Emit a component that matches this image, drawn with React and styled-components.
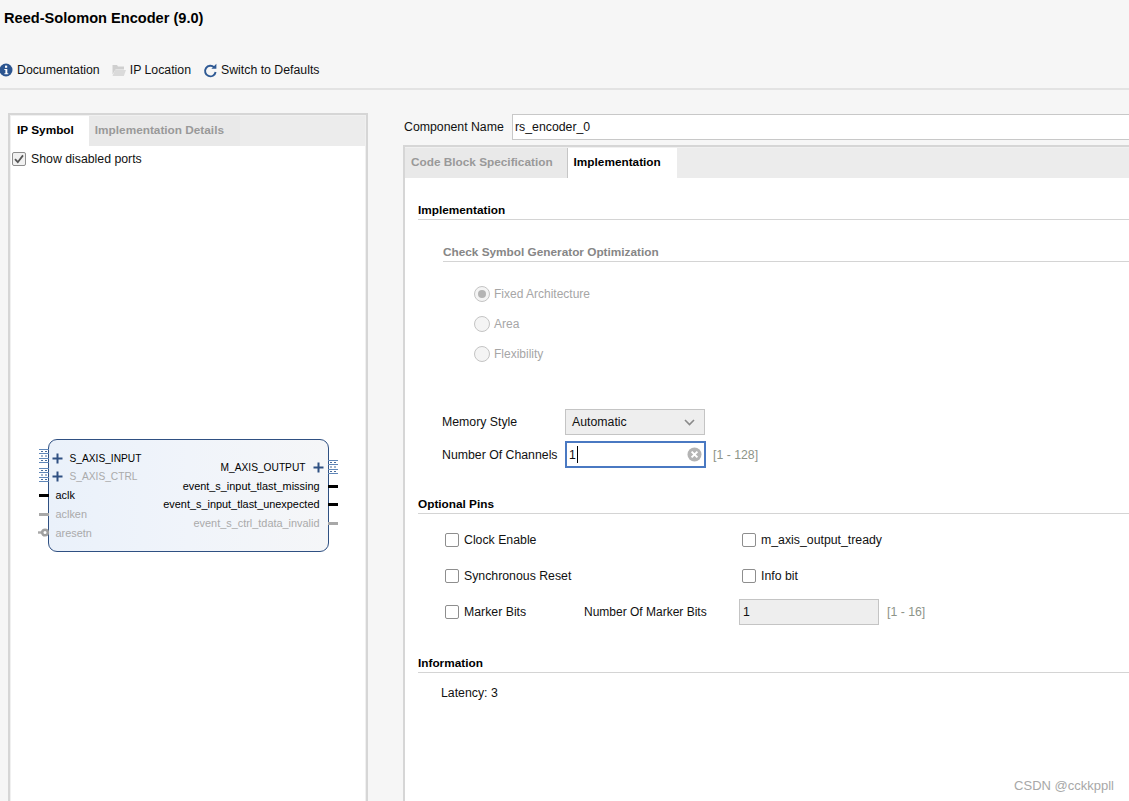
import styled, { createGlobalStyle } from "styled-components"

const GlobalStyle = createGlobalStyle`
  html, body {
    margin: 0;
    padding: 0;
    background: #f6f6f6;
    overflow: hidden;
  }
  * {
    box-sizing: border-box;
  }
`

const Page = styled.div`
  position: relative;
  width: 1129px;
  height: 801px;
  overflow: hidden;
  background: #f6f6f6;
  font-family: "Liberation Sans", Arial, sans-serif;
  font-size: 12.3px;
  color: #111;
`

const Header = styled.header`
  height: 90px;
  border-bottom: 2px solid #e3e3e3;
`

const Title = styled.h1`
  margin: 0;
  height: 36px;
  padding-left: 4px;
  font-size: 14.6px;
  line-height: 37px;
  font-weight: bold;
  color: #000;
`

const Toolbar = styled.div`
  display: flex;
  align-items: center;
  height: 24px;
  margin-top: 22px;
`

const ToolItem = styled.div`
  display: flex;
  align-items: center;
  gap: 4px;
  margin-right: 12px;
`

const Main = styled.main`
  display: flex;
  align-items: flex-start;
  padding: 23px 0 0 8px;
`

const LeftPanel = styled.section`
  flex: none;
  width: 360px;
  height: 720px;
  border: 2px solid #d6d6d6;
  padding: 1px 1px 0 1px;
  background: #f0f0f0;
  display: flex;
  flex-direction: column;
`

const TabStrip = styled.div`
  display: flex;
  flex: none;
  height: 30px;
  background: #ececec;
`

const Tab = styled.div`
  display: flex;
  align-items: center;
  padding: 0 ${(p) => p.$end || 16}px 2px 6px;
  font-weight: bold;
  font-size: 11.8px;
  background: ${(p) => (p.$active ? "#fff" : "#e9e9e9")};
  color: ${(p) => (p.$active ? "#000" : "#999")};
  border-left: ${(p) => (p.$sep ? "1px solid #c6c6c6" : "none")};
`

const PanelBody = styled.div`
  flex: 1;
  background: #fff;
`

const ShowPorts = styled.label`
  display: flex;
  align-items: center;
  gap: 5px;
  height: 26px;
  padding-left: 1px;
`

const Canvas = styled.div`
  display: flex;
  justify-content: center;
  padding-top: 267px;
`

const Block = styled.div`
  position: relative;
  display: flex;
  justify-content: space-between;
  width: 281px;
  height: 113px;
  border: 1px solid #2f5082;
  border-radius: 9px;
  background: linear-gradient(90deg, #eaf1fa 0%, #f0f4fa 50%, #f5f6f8 100%);
`

const PinColumn = styled.div`
  display: flex;
  flex-direction: column;
  padding-top: ${(p) => p.$top}px;
`

const PinRow = styled.div`
  position: relative;
  display: flex;
  align-items: center;
  justify-content: ${(p) => (p.$right ? "flex-end" : "flex-start")};
  gap: 7px;
  height: 18.6px;
  padding: ${(p) => {
    const inset = p.$bus ? 3 : 7
    return p.$right ? `0 ${inset + 1}px 0 0` : `0 0 0 ${inset}px`
  }};
  font-size: ${(p) => (p.$bus ? "10.2px" : "10.9px")};
  color: ${(p) => (p.$off ? "#aaa" : "#000")};
  white-space: nowrap;
`

const Stub = styled.span`
  position: absolute;
  top: 8px;
  width: 10px;
  height: 3px;
  background: ${(p) => (p.$off ? "#a8a8a8" : "#000")};
  ${(p) => (p.$right ? "right: -10px;" : "left: -10px;")}
`

const BusMark = styled.span`
  position: absolute;
  top: ${(p) => (p.$right ? 2 : 0)}px;
  line-height: 0;
  ${(p) => (p.$right ? "right: -10px;" : "left: -10px;")}
`

const ResetMark = styled.span`
  position: absolute;
  top: 4px;
  left: -11px;
  line-height: 0;
`

const RightColumn = styled.section`
  flex: none;
  width: 760px;
  margin-left: 35px;
`

const NameRow = styled.div`
  display: flex;
  align-items: center;
  height: 26px;
  margin-top: 1px;
  padding-left: 1px;
`

const NameLabel = styled.span`
  flex: none;
  width: 108px;
`

const NameInput = styled.div`
  flex: 1;
  height: 26px;
  padding-left: 2px;
  line-height: 24px;
  background: #fff;
  border: 1px solid #c8c8c8;
`

const RightPanel = styled.div`
  display: flex;
  flex-direction: column;
  height: 660px;
  margin-top: 5px;
  border: 2px solid #d6d6d6;
  border-right: none;
  padding-top: 1px;
  background: #f0f0f0;
`

const Content = styled.div`
  flex: 1;
  padding-left: 13px;
  background: #fff;
`

const SectionTitle = styled.div`
  height: 20px;
  margin-top: ${(p) => p.$top}px;
  margin-left: ${(p) => p.$left || 0}px;
  line-height: 21px;
  font-size: 11.8px;
  font-weight: bold;
  color: ${(p) => (p.$muted ? "#868686" : "#000")};
  border-bottom: 1px solid #d4d4d4;
`

const RadioGroup = styled.div`
  margin: 17px 0 0 56px;
`

const RadioRow = styled.div`
  display: flex;
  align-items: center;
  gap: 4px;
  height: 30px;
  font-size: 12px;
  color: #a6a6a6;
`

const Radio = styled.span`
  display: flex;
  align-items: center;
  justify-content: center;
  width: 16px;
  height: 16px;
  border: 1px solid #c4c4c4;
  border-radius: 50%;
  background: #f4f4f4;
  &::after {
    content: "";
    display: ${(p) => (p.$on ? "block" : "none")};
    width: 8px;
    height: 8px;
    border-radius: 50%;
    background: #b4b4b4;
  }
`

const FieldRow = styled.div`
  display: flex;
  align-items: center;
  margin: ${(p) => p.$top}px 0 0 24px;
`

const FieldLabel = styled.span`
  flex: none;
  width: 123px;
`

const Select = styled.div`
  display: flex;
  align-items: center;
  justify-content: space-between;
  width: 140px;
  height: 26px;
  padding: 0 9px 0 6px;
  background: #eee;
  border: 1px solid #c4c4c4;
`

const NumberInput = styled.div`
  display: flex;
  align-items: center;
  justify-content: space-between;
  width: 141px;
  height: 27px;
  padding: 0 2px 0 2px;
  background: #fff;
  border: 2px solid #4a79c2;
`

const Caret = styled.span`
  width: 1px;
  height: 17px;
  margin-left: 1px;
  background: #000;
`

const InputValue = styled.span`
  display: flex;
  align-items: center;
  flex: 1;
`

const Range = styled.span`
  margin-left: ${(p) => p.$left || 8}px;
  color: #8d9488;
`

const PinsGrid = styled.div`
  display: grid;
  grid-template-columns: 139px 155px 300px;
  grid-auto-rows: 36px;
  align-items: center;
  margin: 8px 0 0 27px;
`

const CheckRow = styled.div`
  display: flex;
  align-items: center;
  gap: 5px;
  grid-column: ${(p) => p.$col || "auto"};
  padding-left: ${(p) => p.$indent || 0}px;
`

const CheckBox = styled.span`
  display: flex;
  align-items: center;
  justify-content: center;
  flex: none;
  width: 14px;
  height: 14px;
  border: 1px solid #8e8e8e;
  border-radius: 2px;
  background: ${(p) => (p.$on ? "#f1f1f1" : "#fff")};
`

const MarkerLabel = styled.span`
  font-size: 12px;
`

const MarkerField = styled.div`
  display: flex;
  align-items: center;
`

const MarkerInput = styled.div`
  width: 140px;
  height: 26px;
  padding-left: 3px;
  line-height: 24px;
  background: #eee;
  border: 1px solid #c4c4c4;
`

const InfoLine = styled.div`
  height: 20px;
  margin: 10px 0 0 23px;
  line-height: 21px;
`

const Watermark = styled.div`
  position: absolute;
  right: 15px;
  bottom: 8px;
  font-size: 13px;
  color: #a8a8a8;
`

const InfoIcon = () => (
  <svg width="13" height="14" viewBox="0 0 13 14">
    <circle cx="6" cy="7" r="6.5" fill="#2c5590" />
    <rect x="5" y="2.6" width="2.2" height="2.2" fill="#fff" />
    <path d="M4.4 6h2.9v4.2h1v1H4.4v-1h1V7h-1z" fill="#fff" />
  </svg>
)

const FolderIcon = () => (
  <svg width="14" height="13" viewBox="0 0 14 13">
    <path d="M0.5 1h4.5l1 1.5h6v3H3.5l-3 5z" fill="#cfcfcf" />
    <path d="M3 6h11l-2.2 6H0.5z" fill="#dadada" />
  </svg>
)

const RefreshIcon = () => (
  <svg width="14" height="15" viewBox="0 0 14 15">
    <path d="M11.2 4.4A5.3 5.3 0 1 0 12.6 9" fill="none" stroke="#2f5a94" strokeWidth="1.9" />
    <path d="M8.4 5.8h5V0.8z" fill="#2f5a94" />
  </svg>
)

const BusIcon = () => (
  <svg width="10" height="15" viewBox="0 0 10 15">
    <path d="M0 0.5h10M0 4.5h10M0 9.5h10M0 13.5h10" stroke="#5f86b8" />
    <path d="M2 2.5h2M6 2.5h2M2 7h2M6 7h2M2 11.5h2M6 11.5h2" stroke="#4a6d9c" strokeWidth="1.2" />
  </svg>
)

const PlusIcon = () => (
  <svg width="11" height="11" viewBox="0 0 11 11">
    <path d="M5.5 0.5v10M0.5 5.5h10" stroke="#2f5082" strokeWidth="2" />
  </svg>
)

const ResetIcon = () => (
  <svg width="13" height="11" viewBox="0 0 13 11">
    <path d="M0 5.5h4" stroke="#a8a8a8" strokeWidth="2.4" />
    <circle cx="7" cy="5.5" r="2.8" fill="#fff" stroke="#a0a0a0" strokeWidth="2.6" />
  </svg>
)

const CheckMark = () => (
  <svg width="10" height="10" viewBox="0 0 10 10">
    <path d="M1 5.2l2.8 3L9 1.4" fill="none" stroke="#555" strokeWidth="1.8" />
  </svg>
)

const ChevronIcon = () => (
  <svg width="11" height="7" viewBox="0 0 11 7">
    <path d="M1 1l4.5 4.5L10 1" fill="none" stroke="#8a8a8a" strokeWidth="1.6" />
  </svg>
)

const ClearIcon = () => (
  <svg width="15" height="15" viewBox="0 0 15 15">
    <circle cx="7.5" cy="7.5" r="7" fill="#b4b4b4" />
    <path d="M4.6 4.6l5.8 5.8M10.4 4.6l-5.8 5.8" stroke="#fff" strokeWidth="2" />
  </svg>
)

const leftPins = [
  { name: "S_AXIS_INPUT", bus: true },
  { name: "S_AXIS_CTRL", bus: true, off: true },
  { name: "aclk" },
  { name: "aclken", off: true },
  { name: "aresetn", off: true, reset: true },
]

const rightPins = [
  { name: "M_AXIS_OUTPUT", bus: true },
  { name: "event_s_input_tlast_missing" },
  { name: "event_s_input_tlast_unexpected" },
  { name: "event_s_ctrl_tdata_invalid", off: true },
]

const App = () => {
  return (
    <Page>
      <GlobalStyle />
      <Header>
        <Title>Reed-Solomon Encoder (9.0)</Title>
        <Toolbar>
          <ToolItem>
            <InfoIcon />
            Documentation
          </ToolItem>
          <ToolItem>
            <FolderIcon />
            IP Location
          </ToolItem>
          <ToolItem>
            <RefreshIcon />
            Switch to Defaults
          </ToolItem>
        </Toolbar>
      </Header>
      <Main>
        <LeftPanel>
          <TabStrip>
            <Tab $active $end={15}>
              IP Symbol
            </Tab>
            <Tab>Implementation Details</Tab>
          </TabStrip>
          <PanelBody>
            <ShowPorts>
              <CheckBox $on>
                <CheckMark />
              </CheckBox>
              Show disabled ports
            </ShowPorts>
            <Canvas>
              <Block>
                <PinColumn $top={9}>
                  {leftPins.map((pin) => (
                    <PinRow key={pin.name} $off={pin.off} $bus={pin.bus}>
                      {pin.bus && (
                        <BusMark>
                          <BusIcon />
                        </BusMark>
                      )}
                      {pin.bus && <PlusIcon />}
                      {!pin.bus && !pin.reset && <Stub $off={pin.off} />}
                      {pin.reset && (
                        <ResetMark>
                          <ResetIcon />
                        </ResetMark>
                      )}
                      {pin.name}
                    </PinRow>
                  ))}
                </PinColumn>
                <PinColumn $top={18}>
                  {rightPins.map((pin) => (
                    <PinRow key={pin.name} $right $off={pin.off} $bus={pin.bus}>
                      {pin.name}
                      {pin.bus && <PlusIcon />}
                      {pin.bus ? (
                        <BusMark $right>
                          <BusIcon />
                        </BusMark>
                      ) : (
                        <Stub $right $off={pin.off} />
                      )}
                    </PinRow>
                  ))}
                </PinColumn>
              </Block>
            </Canvas>
          </PanelBody>
        </LeftPanel>
        <RightColumn>
          <NameRow>
            <NameLabel>Component Name</NameLabel>
            <NameInput>rs_encoder_0</NameInput>
          </NameRow>
          <RightPanel>
            <TabStrip>
              <Tab $end={14}>Code Block Specification</Tab>
              <Tab $active $sep>
                Implementation
              </Tab>
            </TabStrip>
            <Content>
              <SectionTitle $top={22}>Implementation</SectionTitle>
              <SectionTitle $top={22} $left={25} $muted>
                Check Symbol Generator Optimization
              </SectionTitle>
              <RadioGroup>
                <RadioRow>
                  <Radio $on />
                  Fixed Architecture
                </RadioRow>
                <RadioRow>
                  <Radio />
                  Area
                </RadioRow>
                <RadioRow>
                  <Radio />
                  Flexibility
                </RadioRow>
              </RadioGroup>
              <FieldRow $top={40}>
                <FieldLabel>Memory Style</FieldLabel>
                <Select>
                  Automatic
                  <ChevronIcon />
                </Select>
              </FieldRow>
              <FieldRow $top={6}>
                <FieldLabel>Number Of Channels</FieldLabel>
                <NumberInput>
                  <InputValue>
                    1
                    <Caret />
                  </InputValue>
                  <ClearIcon />
                </NumberInput>
                <Range $left={7}>[1 - 128]</Range>
              </FieldRow>
              <SectionTitle $top={26}>Optional Pins</SectionTitle>
              <PinsGrid>
                <CheckRow $col="1 / 3">
                  <CheckBox />
                  Clock Enable
                </CheckRow>
                <CheckRow $indent={3}>
                  <CheckBox />
                  m_axis_output_tready
                </CheckRow>
                <CheckRow $col="1 / 3">
                  <CheckBox />
                  Synchronous Reset
                </CheckRow>
                <CheckRow $indent={3}>
                  <CheckBox />
                  Info bit
                </CheckRow>
                <CheckRow>
                  <CheckBox />
                  Marker Bits
                </CheckRow>
                <MarkerLabel>Number Of Marker Bits</MarkerLabel>
                <MarkerField>
                  <MarkerInput>1</MarkerInput>
                  <Range>[1 - 16]</Range>
                </MarkerField>
              </PinsGrid>
              <SectionTitle $top={23}>Information</SectionTitle>
              <InfoLine>Latency: 3</InfoLine>
            </Content>
          </RightPanel>
        </RightColumn>
      </Main>
      <Watermark>CSDN @cckkppll</Watermark>
    </Page>
  )
}

export default App
